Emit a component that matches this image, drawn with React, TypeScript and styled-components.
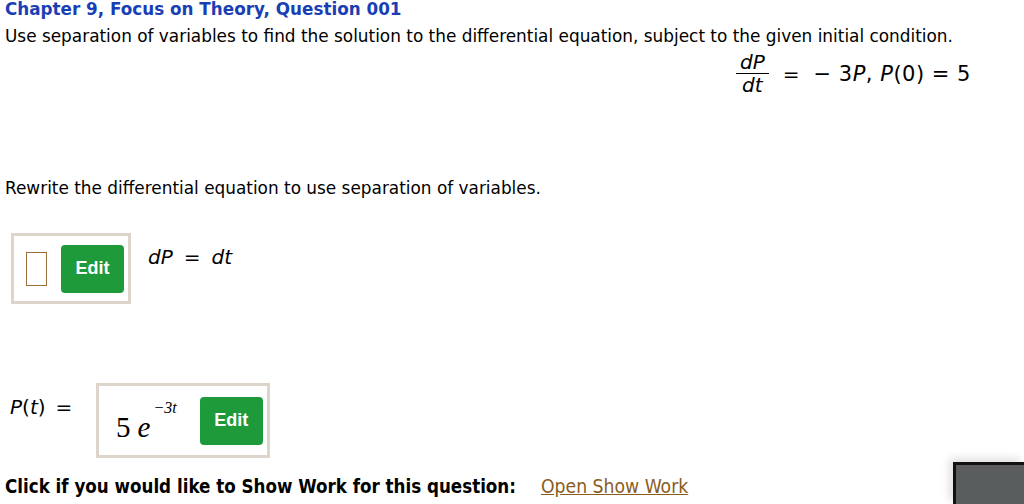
import React from "react";
import styled, { createGlobalStyle } from "styled-components";

const Global = createGlobalStyle`
  html, body { margin: 0; padding: 0; background: #ffffff; }
  body { font-family: "DejaVu Sans", Verdana, sans-serif; color: #000; overflow: hidden; }
`;

const Page = styled.div`
  width: 1024px;
  height: 504px;
  position: relative;
  padding: 0 5px;
  box-sizing: border-box;
  display: flex;
  flex-direction: column;
`;

const Title = styled.div`
  font-weight: bold;
  font-size: 16.8px;
  color: #1a3fb4;
  line-height: 18px;
`;

const Para = styled.div`
  font-size: 16.9px;
  line-height: 20px;
  margin-top: 8px;
`;

const It = styled.i`
  font-style: italic;
`;

const FormulaRow = styled.div`
  display: flex;
  align-items: center;
  margin-left: 731px;
  margin-top: 5px;
  height: 46px;
  font-family: "DejaVu Sans", sans-serif;
  font-size: 20px;
`;

const Frac = styled.span`
  display: inline-flex;
  flex-direction: column;
  align-items: center;
  margin-right: 14px;
`;

const Num = styled.span`
  font-style: italic;
  padding: 0 4px;
  line-height: 22px;
  border-bottom: 1px solid #000;
`;

const Den = styled.span`
  font-style: italic;
  padding: 0 4px;
  line-height: 23px;
`;

const RightSide = styled.span`
  font-size: 21px;
  letter-spacing: 0.5px;
  word-spacing: 0px;
`;

const Gap = styled.span<{ w: number }>`
  display: inline-block;
  width: ${(p) => p.w}px;
`;

const Spacer = styled.div<{ h: number }>`
  height: ${(p) => p.h}px;
  flex-shrink: 0;
`;

const AnswerRow = styled.div`
  display: flex;
  align-items: flex-start;
`;

const AnswerBox = styled.div<{ w: number; h: number; pl: number }>`
  display: flex;
  align-items: center;
  width: ${(p) => p.w}px;
  height: ${(p) => p.h}px;
  padding-left: ${(p) => p.pl}px;
  border: 3px solid #ddd5cc;
  box-sizing: border-box;
  background: #fff;
`;

const EmptyInput = styled.div`
  width: 21px;
  height: 34px;
  border: 1.5px solid #9b6f3c;
  box-sizing: border-box;
  margin-right: 14px;
`;

const EditButton = styled.button<{ ml?: number }>`
  background: #1f9a3b;
  color: #fff;
  font-family: "Liberation Sans", Arial, sans-serif;
  font-weight: bold;
  font-size: 18px;
  border: none;
  border-radius: 4px;
  width: 63px;
  height: 48px;
  padding: 0;
  margin-left: ${(p) => p.ml ?? 0}px;
`;

const MathText = styled.div<{ ml: number; mt: number; w?: number }>`
  font-family: "DejaVu Sans", sans-serif;
  font-size: 20px;
  margin-left: ${(p) => p.ml}px;
  margin-top: ${(p) => p.mt}px;
  width: ${(p) => (p.w ? `${p.w}px` : "auto")};
  flex-shrink: 0;
`;

const Eq = styled.span<{ m: number }>`
  margin: 0 ${(p) => p.m}px;
`;

const SerifMath = styled.div`
  font-family: "Liberation Serif", "Times New Roman", serif;
  font-size: 29px;
  line-height: 32px;
  display: flex;
  align-items: flex-start;
  margin-top: 12px;
`;

const EVar = styled.i`
  margin-left: 7px;
`;

const Sup = styled.span`
  font-size: 16px;
  line-height: 16px;
  margin-left: 3px;
  margin-top: -11px;
  font-style: italic;
`;

const Bottom = styled.div`
  display: flex;
  align-items: center;
  line-height: 20px;
`;

const BoldText = styled.span`
  font-family: "DejaVu Sans Condensed", "DejaVu Sans", sans-serif;
  font-weight: bold;
  font-size: 18.6px;
`;

const Link = styled.a`
  font-family: "DejaVu Sans Condensed", "DejaVu Sans", sans-serif;
  color: #8a5d1e;
  text-decoration: underline;
  font-size: 19.2px;
  margin-left: 25px;
`;

const DarkPanel = styled.div`
  position: absolute;
  right: 0;
  bottom: 0;
  width: 71px;
  height: 42px;
  background: #5a5d5e;
  border-top: 3px solid #111;
  border-left: 3px solid #111;
  box-sizing: border-box;
  box-shadow: -4px -4px 8px rgba(0,0,0,0.12);
`;

export default function App() {
  return (
    <>
      <Global />
      <Page>
        <Title>Chapter 9, Focus on Theory, Question 001</Title>
        <Para>
          Use separation of variables to find the solution to the differential equation, subject to the given initial condition.
        </Para>
        <FormulaRow>
          <Frac>
            <Num>dP</Num>
            <Den>dt</Den>
          </Frac>
          <span>=</span>
          <Gap w={14} />
          <RightSide>− 3<It>P</It>, <It>P</It>(0) = 5</RightSide>
        </FormulaRow>
        <Spacer h={73} />
        <Para>Rewrite the differential equation to use separation of variables.</Para>
        <Spacer h={35} />
        <AnswerRow>
          <AnswerBox w={120} h={71} pl={12} style={{ marginLeft: 6 }}>
            <EmptyInput />
            <EditButton>Edit</EditButton>
          </AnswerBox>
          <MathText ml={17} mt={12}>
            <It>dP</It>
            <Eq m={11}>=</Eq>
            <It>dt</It>
          </MathText>
        </AnswerRow>
        <Spacer h={79} />
        <AnswerRow>
          <MathText ml={5} mt={12} w={86}>
            <It>P</It>(<It>t</It>)<Eq m={10}>=</Eq>
          </MathText>
          <AnswerBox w={174} h={75} pl={17}>
            <SerifMath>
              5<EVar>e</EVar>
              <Sup>−3t</Sup>
            </SerifMath>
            <EditButton ml={23}>Edit</EditButton>
          </AnswerBox>
        </AnswerRow>
        <Spacer h={19} />
        <Bottom>
          <BoldText>Click if you would like to Show Work for this question:</BoldText>
          <Link>Open Show Work</Link>
        </Bottom>
        <DarkPanel />
      </Page>
    </>
  );
}
